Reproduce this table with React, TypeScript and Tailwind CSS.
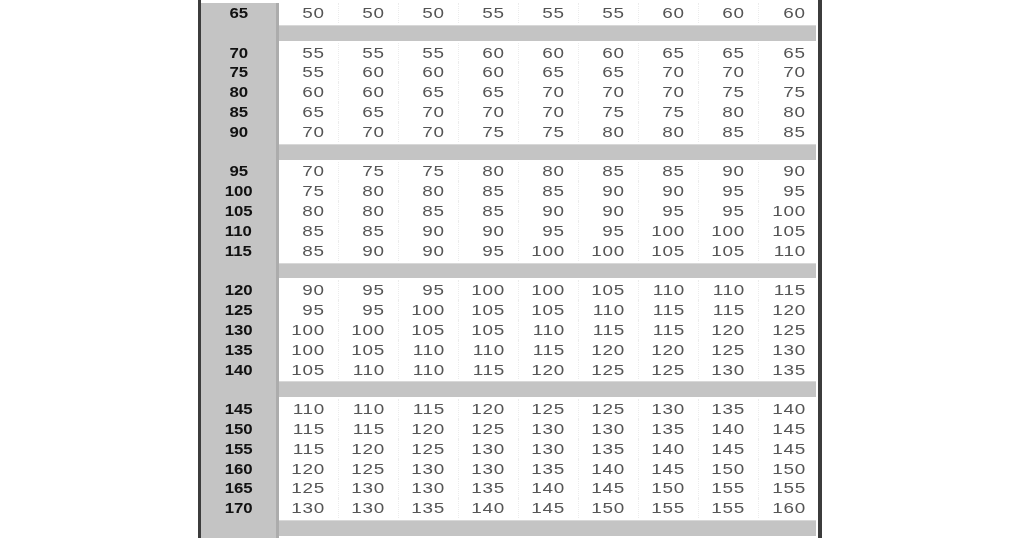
import React from "react";

type Row = { kind: "data"; label: number; vals: number[]; first?: boolean } | { kind: "band" };

const data: [number, number[]][] = [
  [65, [50, 50, 50, 55, 55, 55, 60, 60, 60]],
  [70, [55, 55, 55, 60, 60, 60, 65, 65, 65]],
  [75, [55, 60, 60, 60, 65, 65, 70, 70, 70]],
  [80, [60, 60, 65, 65, 70, 70, 70, 75, 75]],
  [85, [65, 65, 70, 70, 70, 75, 75, 80, 80]],
  [90, [70, 70, 70, 75, 75, 80, 80, 85, 85]],
  [95, [70, 75, 75, 80, 80, 85, 85, 90, 90]],
  [100, [75, 80, 80, 85, 85, 90, 90, 95, 95]],
  [105, [80, 80, 85, 85, 90, 90, 95, 95, 100]],
  [110, [85, 85, 90, 90, 95, 95, 100, 100, 105]],
  [115, [85, 90, 90, 95, 100, 100, 105, 105, 110]],
  [120, [90, 95, 95, 100, 100, 105, 110, 110, 115]],
  [125, [95, 95, 100, 105, 105, 110, 115, 115, 120]],
  [130, [100, 100, 105, 105, 110, 115, 115, 120, 125]],
  [135, [100, 105, 110, 110, 115, 120, 120, 125, 130]],
  [140, [105, 110, 110, 115, 120, 125, 125, 130, 135]],
  [145, [110, 110, 115, 120, 125, 125, 130, 135, 140]],
  [150, [115, 115, 120, 125, 130, 130, 135, 140, 145]],
  [155, [115, 120, 125, 130, 130, 135, 140, 145, 145]],
  [160, [120, 125, 130, 130, 135, 140, 145, 150, 150]],
  [165, [125, 130, 130, 135, 140, 145, 150, 155, 155]],
  [170, [130, 130, 135, 140, 145, 150, 155, 155, 160]],
];

const groups = [[65], [70, 75, 80, 85, 90], [95, 100, 105, 110, 115], [120, 125, 130, 135, 140], [145, 150, 155, 160, 165, 170]];

const rows: Row[] = [];
groups.forEach((g, gi) => {
  g.forEach((lab) => {
    const d = data.find((x) => x[0] === lab)!;
    rows.push({ kind: "data", label: lab, vals: d[1], first: gi === 0 });
  });
  rows.push({ kind: "band" });
});

export default function App() {
  return (
    <div
      className="w-[1024px] h-[538px] overflow-hidden bg-white flex"
      style={{ fontFamily: '"Liberation Sans", Arial, sans-serif' }}
    >
      <div className="w-[198px] shrink-0" />
      <div className="flex flex-col shrink-0 border-l-[3px] border-r-[4px] border-[#3c3c3c] blur-[0.7px]">
        {rows.map((r, i) =>
          r.kind === "data" ? (
            <div key={i} className={`flex ${r.first ? "h-[23px] pt-[3px]" : "h-[20px]"}`}>
              <div className="w-[78px] shrink-0 bg-[#c4c4c4] border-r-[3px] border-[#acacac] flex items-center justify-center text-[14px] font-bold text-[#111] leading-none">
                <span className="inline-block scale-x-[1.2]">{r.label}</span>
              </div>
              <div className="w-[539px] flex">
                {r.vals.map((v, j) => (
                  <div
                    key={j}
                    className="w-[60px] shrink-0 flex items-center justify-end pr-[13px] text-[14px] tracking-[0.5px] text-[#555] leading-none border-r border-dotted border-[#ececec] last:border-r-0"
                  >
                    <span className="inline-block scale-x-[1.35] origin-right">{v}</span>
                  </div>
                ))}
              </div>
            </div>
          ) : (
            <div key={i} className="flex h-[20px]">
              <div className="w-[78px] shrink-0 bg-[#c4c4c4] border-r-[3px] border-[#acacac]" />
              <div className="w-[539px] py-[2px] pr-[2px]">
                <div className="h-full bg-[#c4c4c4] border-t border-[#d8d8d8]" />
              </div>
            </div>
          )
        )}
      </div>
      <div className="flex-1" />
    </div>
  );
}
